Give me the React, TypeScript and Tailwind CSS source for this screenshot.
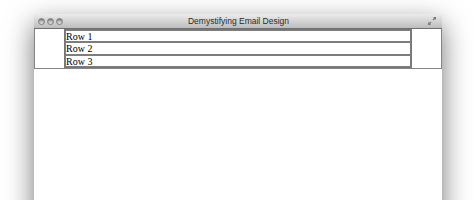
import React from 'react';

const rows = ['Row 1', 'Row 2', 'Row 3'];

function TrafficLight() {
  return (
    <span className="block h-[7px] w-[7px] rounded-full border border-[#7f7f7f] bg-gradient-to-b from-[#9f9f9f] to-[#e2e2e2] shadow-[inset_0_1px_1px_rgba(0,0,0,0.3)]" />
  );
}

function ResizeIcon() {
  return (
    <svg width="10" height="10" viewBox="0 0 10 10" className="text-[#7a7a7a]">
      <path d="M6 1h3v3z" fill="currentColor" />
      <path d="M8.5 1.5L6 4" stroke="currentColor" strokeWidth="1.2" />
      <path d="M4 9H1V6z" fill="currentColor" />
      <path d="M1.5 8.5L4 6" stroke="currentColor" strokeWidth="1.2" />
    </svg>
  );
}

export default function App() {
  return (
    <div className="h-[200px] w-[474px] overflow-hidden bg-white">
      <div className="ml-[34px] mt-[14px] h-[240px] w-[408px] bg-white shadow-[0_10px_26px_rgba(0,0,0,0.55)]">
        {/* Title bar */}
        <div className="relative flex h-[15px] items-center border-b border-[#6f6f6f] bg-gradient-to-b from-[#ececec] to-[#bdbdbd] px-[4px]">
          <div className="flex gap-[2px]">
            <TrafficLight />
            <TrafficLight />
            <TrafficLight />
          </div>
          <div
            className="flex-1 pr-[24px] text-center text-[8.5px] leading-none text-[#2a2a2a]"
            style={{ fontFamily: '"Liberation Sans", Arial, sans-serif' }}
          >
            Demystifying Email Design
          </div>
          <div className="absolute right-[5px] top-[2px]">
            <ResizeIcon />
          </div>
        </div>

        {/* Outer table */}
        <div className="border border-t-0 border-[#858585] px-[29px]">
          <div className="border border-[#777]">
            {rows.map((r, i) => (
              <div
                key={r}
                className={`border border-[#7d7d7d] ${i === 0 ? 'h-[12px]' : 'h-[12.5px]'} text-[10px] leading-[11px] text-black`}
                style={{ fontFamily: '"Liberation Serif", "Times New Roman", serif' }}
              >
                {r}
              </div>
            ))}
          </div>
        </div>
      </div>
    </div>
  );
}
